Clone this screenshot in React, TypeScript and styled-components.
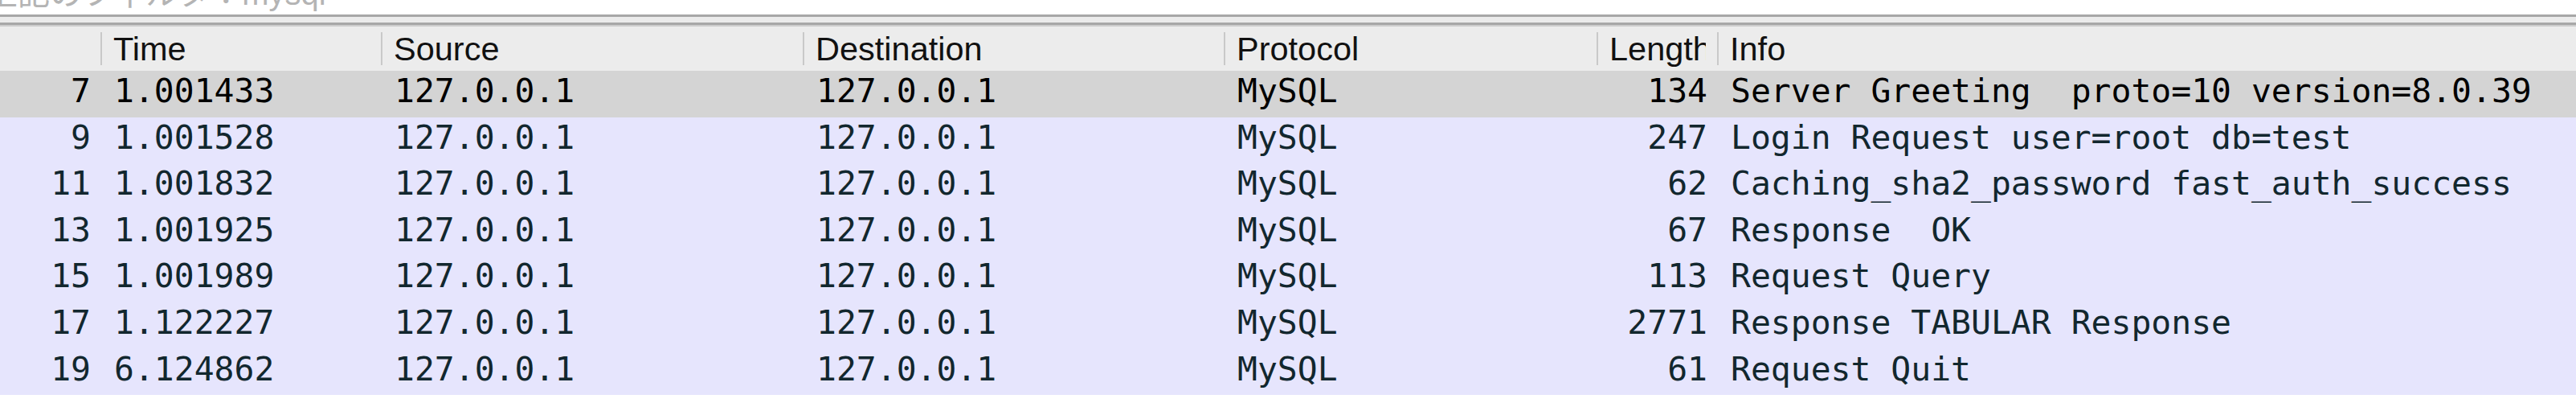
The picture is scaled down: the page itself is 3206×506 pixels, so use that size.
import React from 'react';
import styled, { createGlobalStyle } from 'styled-components';

const GlobalStyle = createGlobalStyle`
  html, body {
    margin: 0;
    padding: 0;
    background: #ffffff;
  }
  body {
    width: 3206px;
    height: 506px;
    overflow: hidden;
  }
`;

const COLS = '125px 349px 525px 524px 464px 150px 1fr';

const Page = styled.div`
  width: 3206px;
  height: 506px;
  background: #ffffff;
  display: flex;
  flex-direction: column;
`;

const CaptionStrip = styled.div`
  flex: none;
  height: 18px;
  overflow: hidden;
`;

const Caption = styled.div`
  margin-top: -28px;
  margin-left: -18px;
  font-family: "Liberation Sans", "Noto Sans CJK JP", sans-serif;
  font-size: 40px;
  line-height: 40px;
  color: #b4b4b4;
  white-space: nowrap;
`;

const Divider = styled.div`
  flex: none;
  height: 15px;
  background: linear-gradient(
    to bottom,
    #a7a7a7 0px,
    #a7a7a7 3px,
    #ebebeb 3px,
    #ebebeb 10px,
    #a7a7a7 10px,
    #a7a7a7 13px,
    #cdcdcd 13px,
    #cdcdcd 15px
  );
`;

const HeaderRow = styled.div`
  flex: none;
  display: grid;
  grid-template-columns: ${COLS};
  height: 55px;
  background: #ececec;
`;

const HeaderCell = styled.div`
  display: flex;
  align-items: center;
  min-width: 0;
  padding-right: 14px;
  font-family: "Liberation Sans", Arial, sans-serif;
  font-size: 41.5px;
  line-height: 55px;
  color: #111111;
  white-space: nowrap;
`;

const HeaderSep = styled.span`
  flex: none;
  width: 2px;
  height: 41px;
  background: #c9c9c9;
  margin-right: 14px;
`;

const HeaderLabel = styled.span`
  min-width: 0;
  overflow: hidden;
`;

const Body = styled.div`
  flex: none;
  display: flex;
  flex-direction: column;
`;

const Row = styled.div<{ $selected?: boolean }>`
  flex: none;
  display: grid;
  grid-template-columns: ${COLS};
  height: 57.6px;
  background: ${(p) => (p.$selected ? '#d4d4d4' : '#e6e5fd')};
  color: ${(p) => (p.$selected ? '#000000' : '#12272e')};
  font-family: "DejaVu Sans Mono", "Liberation Mono", monospace;
  font-size: 41.4px;
  line-height: 50.8px;
`;

const Cell = styled.div<{ $right?: boolean }>`
  min-width: 0;
  overflow: hidden;
  white-space: pre;
  text-align: ${(p) => (p.$right ? 'right' : 'left')};
  padding: ${(p) => (p.$right ? '0 12px 0 0' : '0 0 0 17px')};
`;

type Packet = {
  no: number;
  time: string;
  src: string;
  dst: string;
  proto: string;
  len: number;
  info: string;
};

const packets: Packet[] = [
  { no: 7, time: '1.001433', src: '127.0.0.1', dst: '127.0.0.1', proto: 'MySQL', len: 134, info: 'Server Greeting  proto=10 version=8.0.39' },
  { no: 9, time: '1.001528', src: '127.0.0.1', dst: '127.0.0.1', proto: 'MySQL', len: 247, info: 'Login Request user=root db=test' },
  { no: 11, time: '1.001832', src: '127.0.0.1', dst: '127.0.0.1', proto: 'MySQL', len: 62, info: 'Caching_sha2_password fast_auth_success' },
  { no: 13, time: '1.001925', src: '127.0.0.1', dst: '127.0.0.1', proto: 'MySQL', len: 67, info: 'Response  OK' },
  { no: 15, time: '1.001989', src: '127.0.0.1', dst: '127.0.0.1', proto: 'MySQL', len: 113, info: 'Request Query' },
  { no: 17, time: '1.122227', src: '127.0.0.1', dst: '127.0.0.1', proto: 'MySQL', len: 2771, info: 'Response TABULAR Response' },
  { no: 19, time: '6.124862', src: '127.0.0.1', dst: '127.0.0.1', proto: 'MySQL', len: 61, info: 'Request Quit' },
];

const headers = ['Time', 'Source', 'Destination', 'Protocol', 'Length', 'Info'];

export default function App() {
  return (
    <>
      <GlobalStyle />
      <Page>
        <CaptionStrip>
          <Caption>上記のフィルタ：mysql</Caption>
        </CaptionStrip>
        <Divider />
        <HeaderRow>
          <HeaderCell />
          {headers.map((h) => (
            <HeaderCell key={h}>
              <HeaderSep />
              <HeaderLabel>{h}</HeaderLabel>
            </HeaderCell>
          ))}
        </HeaderRow>
        <Body>
          {packets.map((p, i) => (
            <Row key={p.no} $selected={i === 0}>
              <Cell $right>{p.no}</Cell>
              <Cell>{p.time}</Cell>
              <Cell>{p.src}</Cell>
              <Cell>{p.dst}</Cell>
              <Cell>{p.proto}</Cell>
              <Cell $right>{p.len}</Cell>
              <Cell>{p.info}</Cell>
            </Row>
          ))}
        </Body>
      </Page>
    </>
  );
}
